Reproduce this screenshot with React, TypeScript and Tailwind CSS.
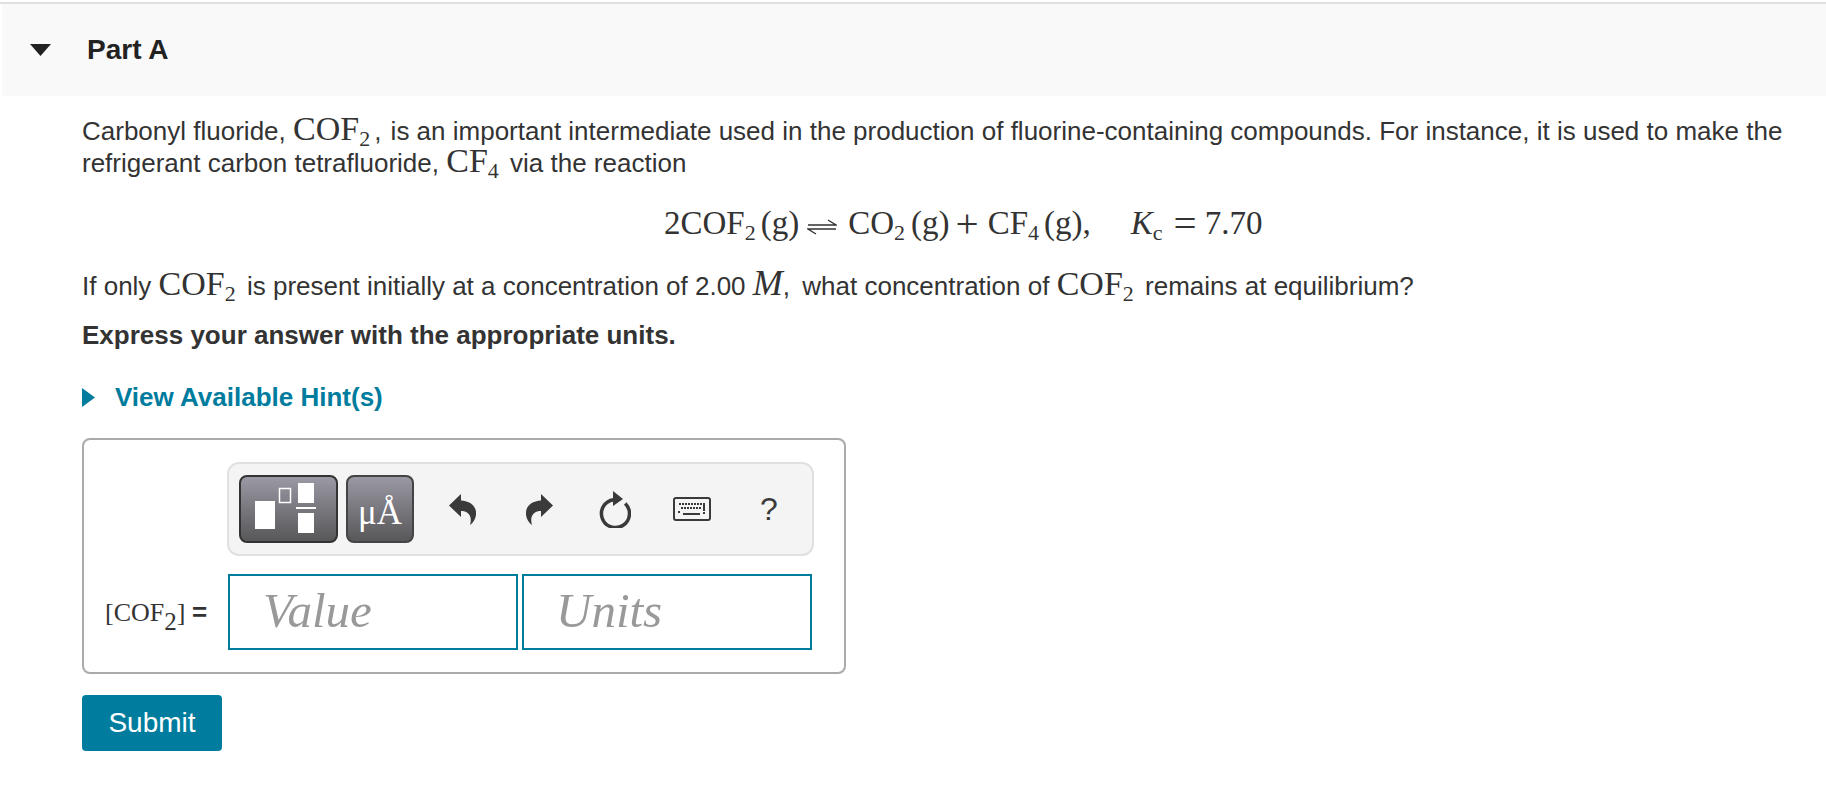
import React from 'react';

const serif = "font-['Liberation_Serif',serif]";

function Sub({ children, size = 'text-[22px]' }: { children: React.ReactNode; size?: string }) {
  return <span className={`${size} align-[-6px] leading-[0]`}>{children}</span>;
}

function Chem({ base, sub }: { base: string; sub: string }) {
  return (
    <span className={`${serif} pr-[4px] text-[34px] leading-[0]`}>
      {base}
      <Sub>{sub}</Sub>
    </span>
  );
}

function UndoIcon({ flip }: { flip?: boolean }) {
  return (
    <svg width="27" height="31" viewBox="0 0 27 31" className={flip ? '-scale-x-100' : ''}>
      <path
        d="M0 11.5 12 0v6.5C22 7 28 13 27 21c-.5 4-3 8-6 10 1.500-5 1-10-3-12.500C16 17.300 14 17 12 17v6Z"
        fill="#3a3a3a"
      />
    </svg>
  );
}

function ReloadIcon() {
  return (
    <svg width="32" height="37" viewBox="0 0 32 37">
      <path d="M25.200 11.500A14 14 0 1 1 13.500 7.700" fill="none" stroke="#3a3a3a" strokeWidth="3.500" transform="translate(1 1)" />
      <path d="M14 0l10 8-10 7Z" fill="#3a3a3a" />
    </svg>
  );
}

function KeyboardIcon() {
  const top = [6, 9, 12, 15, 18, 21, 24, 27, 30];
  const mid = [8, 11, 14, 17, 20, 23, 26];
  return (
    <svg width="38" height="24" viewBox="0 0 38 24">
      <rect x="1" y="1" width="36" height="22" rx="2" fill="#f4f4f4" stroke="#3a3a3a" strokeWidth="2" />
      {top.map(x => (
        <rect key={x} x={x} y="6" width="2" height="2" fill="#3a3a3a" />
      ))}
      {mid.map(x => (
        <rect key={x} x={x} y="10" width="2" height="2" fill="#3a3a3a" />
      ))}
      <rect x="30" y="6" width="2" height="8" fill="#3a3a3a" />
      <rect x="5" y="14" width="2" height="2" fill="#3a3a3a" />
      <rect x="30" y="15" width="2" height="2" fill="#3a3a3a" />
      <rect x="10" y="16" width="17" height="2" fill="#3a3a3a" />
    </svg>
  );
}

function TemplatesIcon() {
  return (
    <svg width="95" height="64" viewBox="0 0 95 64">
      <rect x="14" y="24" width="20" height="28" fill="#fff" />
      <rect x="38.500" y="11.500" width="11" height="14" fill="none" stroke="#fff" strokeWidth="1.500" />
      <rect x="57" y="6" width="16" height="20" fill="#fff" />
      <rect x="55" y="30" width="20" height="2" fill="#fff" />
      <rect x="57" y="36" width="16" height="20" fill="#fff" />
    </svg>
  );
}

function EquilibriumArrow() {
  return (
    <svg width="30" height="16" viewBox="0 0 30 16" className="mr-[11px] ml-[8px] inline-block align-[-1px]">
      <path d="M1 6h28L21 1M29 10H1l8 5" fill="none" stroke="#333" strokeWidth="1.300" />
    </svg>
  );
}

export default function App() {
  return (
    <div className="min-h-[802px] bg-white pt-[2px] font-['Liberation_Sans',sans-serif] text-[#333]">
      <div className="h-[2px] bg-[#e0e0e0]" />
      <div className="ml-[2px] flex h-[92px] items-center bg-[#f9f9f9]">
        <svg width="21" height="12" viewBox="0 0 21 12" className="ml-[28px]">
          <path d="M0 0h21L10.500 12Z" fill="#222" />
        </svg>
        <h2 className="ml-[36px] text-[28px] font-bold text-[#222]">Part A</h2>
      </div>

      <div className="pl-[82px] pr-[30px] text-[26px]">
        <p className="mt-[19px] leading-[32px]">
          Carbonyl fluoride, <Chem base="COF" sub="2" />
          <span className="mr-[2px]">,</span> is an important intermediate used in the production of
          fluorine-containing compounds. For instance, it is used to make the refrigerant carbon tetrafluoride,{' '}
          <Chem base="CF" sub="4" /> via the reaction
        </p>

        <div className={`${serif} mt-[22px] h-[44px] pl-[582px] text-[33px] leading-[44px] whitespace-nowrap`}>
          2COF<Sub>2</Sub><span className="ml-[5px]">(g)</span>
          <EquilibriumArrow />
          CO<Sub>2</Sub><span className="ml-[6px]">(g)</span>
          <span className="mr-[9px] ml-[6px] align-[-3px] text-[41px] leading-[0]">+</span>
          CF<Sub>4</Sub><span className="ml-[5px]">(g),</span>
          <span className="ml-[40px] italic">K</span>
          <Sub>c</Sub>
          <span className="mr-[8px] ml-[11px] align-[-3px] text-[41px] leading-[0]">=</span>7.70
        </div>

        <p className="mt-[25px] leading-[32px]">
          If only <Chem base="COF" sub="2" /> is present initially at a concentration of 2.00{' '}
          <span className={`${serif} text-[36px] italic leading-[0]`}>M</span>
          <span className="mr-[5px]">,</span> what concentration of <Chem base="COF" sub="2" /> remains at equilibrium?
        </p>

        <p className="mt-[17px] leading-[32px] font-bold">Express your answer with the appropriate units.</p>

        <div className="mt-[30px] flex h-[32px] items-center">
          <svg width="13" height="19" viewBox="0 0 13 19">
            <path d="M0 0l13 9.500L0 19Z" fill="#007c9e" />
          </svg>
          <span className="ml-[20px] font-bold text-[#007c9e]">View Available Hint(s)</span>
        </div>

        <div className="mt-[25px] h-[236px] w-[764px] rounded-[8px] border-2 border-[#aaa] pt-[22px] pl-[143px]">
          <div className="flex h-[94px] w-[587px] items-center rounded-[12px] border-2 border-[#e0e0e0] bg-[#f4f4f4] pl-[10px]">
            <button className="flex h-[68px] w-[99px] items-center justify-center rounded-[8px] border-2 border-[#333] bg-gradient-to-b from-[#9b99a4] to-[#58585a]">
              <TemplatesIcon />
            </button>
            <button
              className={`${serif} ml-[8px] flex h-[68px] w-[68px] items-center justify-center rounded-[8px] border-2 border-[#444] bg-gradient-to-b from-[#9b99a4] to-[#58585a] pt-[6px] text-[35px] leading-none text-white`}
            >
              μÅ
            </button>
            <span className="ml-[35px] flex"><UndoIcon /></span>
            <span className="ml-[50px] flex"><UndoIcon flip /></span>
            <span className="ml-[46px] flex"><ReloadIcon /></span>
            <span className="ml-[42px] flex"><KeyboardIcon /></span>
            <span className="ml-[49px] text-[32px] leading-none text-[#3a3a3a]">?</span>
          </div>

          <div className="mt-[18px] -ml-[122px] flex items-center">
            <span className={`${serif} w-[123px] text-[26px] whitespace-nowrap`}>
              [COF<span className="align-[-9px] text-[25px] leading-[0]">2</span>]{' '}
              <span className="font-['Liberation_Sans',sans-serif] font-bold">=</span>
            </span>
            <input
              placeholder="Value"
              className={`${serif} h-[76px] w-[290px] border-2 border-[#007c9e] pb-[3px] pl-[33px] text-[49px] italic outline-none placeholder:text-[#999]`}
            />
            <input
              placeholder="Units"
              className={`${serif} ml-[4px] h-[76px] w-[290px] border-2 border-[#007c9e] pb-[3px] pl-[32px] text-[49px] italic outline-none placeholder:text-[#999]`}
            />
          </div>
        </div>

        <button className="mt-[21px] h-[56px] w-[140px] rounded-[4px] bg-[#007c9e] text-[28px] text-white">Submit</button>
      </div>
    </div>
  );
}
